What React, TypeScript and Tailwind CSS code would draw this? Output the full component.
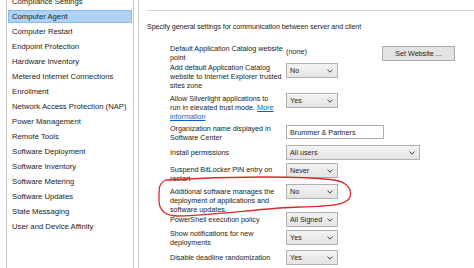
import { ReactNode } from "react";

const items = [
  "Compliance Settings",
  "Computer Agent",
  "Computer Restart",
  "Endpoint Protection",
  "Hardware Inventory",
  "Metered Internet Connections",
  "Enrollment",
  "Network Access Protection (NAP)",
  "Power Management",
  "Remote Tools",
  "Software Deployment",
  "Software Inventory",
  "Software Metering",
  "Software Updates",
  "State Messaging",
  "User and Device Affinity",
];

const Chevron = () => (
  <svg width="6" height="4" viewBox="0 0 6 4" className="shrink-0">
    <polyline points="0.5,0.5 3,3.2 5.5,0.5" fill="none" stroke="#444" strokeWidth="1" />
  </svg>
);

interface DropProps {
  value: string;
  wide?: boolean;
}

const Drop = ({ value, wide }: DropProps) => (
  <div
    className={
      (wide ? "w-[134px] " : "w-[52px] ") +
      "flex h-[15px] items-center justify-between border border-[#b1b1b1] bg-gradient-to-b from-[#f3f3f3] to-[#e4e4e4] pl-[3px] pr-[4px]"
    }
  >
    <span>{value}</span>
    <Chevron />
  </div>
);

const Label = ({ children }: { children: ReactNode }) => <div className="w-[116px] shrink-0">{children}</div>;

export default function App() {
  return (
    <div className="relative flex h-[268px] w-[474px] overflow-hidden bg-white font-['Liberation_Sans',Arial,sans-serif] text-[#222]">
      {/* settings list */}
      <div className="flex w-[138px] shrink-0">
        <div className="w-[6px]" />
        <div className="w-[128px] overflow-hidden border-x border-[#c9c9c9]">
          <ul className="-mt-[6px] text-[7.7px] leading-[11px]">
            {items.map((it) => (
              <li key={it} className="h-[15px] p-[1px]">
                <div
                  className={
                    it === "Computer Agent"
                      ? "h-[13px] whitespace-nowrap border border-[#86bbee] bg-[#aed3f7] pl-[3px]"
                      : "h-[13px] whitespace-nowrap border border-transparent pl-[3px]"
                  }
                >
                  {it}
                </div>
              </li>
            ))}
          </ul>
        </div>
        <div className="w-[4px]" />
      </div>

      {/* general settings */}
      <div className="flex-1 border-l border-[#cfcfcf] text-[7.2px] leading-[9px]">
        <div className="ml-[8px] mt-[10px] border-t border-[#d4d4d4]" />
        <p className="ml-[8px] mt-[11px] whitespace-nowrap tracking-[-0.1px]">
          Specify general settings for communication between server and client
        </p>

        <div className="mt-[13px] pl-[31px]">
          <div className="flex h-[19px]">
            <Label>
              Default Application Catalog website
              <br />
              point
            </Label>
            <div className="w-[96px] pt-[3px]">(none)</div>
            <div className="mt-[2px] flex h-[15px] w-[73px] items-center justify-center border border-[#adadad] bg-[#e3e3e3]">
              Set Website ...
            </div>
          </div>

          <div className="flex h-[30px]">
            <Label>
              Add default Application Catalog
              <br />
              website to Internet Explorer trusted
              <br />
              sites zone
            </Label>
            <Drop value="No" />
          </div>

          <div className="flex h-[31px]">
            <div className="w-[116px] shrink-0 pt-[1px]">
              Allow Silverlight applications to
              <br />
              run in elevated trust mode. <span className="text-[#0066cc] underline">More</span>
              <br />
              <span className="text-[#0066cc] underline">information</span>
            </div>
            <Drop value="Yes" />
          </div>

          <div className="flex h-[21px]">
            <Label>
              Organization name displayed in
              <br />
              Software Center
            </Label>
            <div className="mt-[1px] flex h-[14px] w-[98px] items-center border border-[#abadb3] bg-white pl-[3px]">
              Brummer &amp; Partners
            </div>
          </div>

          <div className="flex h-[18px]">
            <div className="w-[116px] shrink-0 pt-[3px]">Install permissions</div>
            <Drop value="All users" wide />
          </div>

          <div className="flex h-[21px]">
            <div className="w-[116px] shrink-0 pt-[2px]">
              Suspend BitLocker PIN entry on
              <br />
              restart
            </div>
            <Drop value="Never" />
          </div>

          <div className="flex h-[28px]">
            <div className="w-[116px] shrink-0 pt-[3px]">
              Additional software manages the
              <br />
              deployment of applications and
              <br />
              software updates.
            </div>
            <Drop value="No" />
          </div>

          <div className="flex h-[17px]">
            <div className="w-[116px] shrink-0 pt-[3px]">PowerShell execution policy</div>
            <Drop value="All Signed" />
          </div>

          <div className="flex h-[21px]">
            <Label>
              Show notifications for new
              <br />
              deployments
            </Label>
            <div className="mt-[1px]">
              <Drop value="Yes" />
            </div>
          </div>

          <div className="flex h-[15px]">
            <div className="w-[116px] shrink-0 pt-[3px]">Disable deadline randomization</div>
            <Drop value="Yes" />
          </div>
        </div>
      </div>

      {/* hand-drawn red annotation */}
      <svg className="pointer-events-none absolute left-0 top-0" width="474" height="268" viewBox="0 0 474 268">
        <path
          d="M 166 180 C 230 176, 305 176, 334 180 C 348 182, 352 190, 350 197 C 347 205, 333 206, 300 207 C 262 208, 220 215, 178 216 C 164 216, 159 210, 159 200 C 159 190, 158 183, 166 180"
          fill="none"
          stroke="#d82a2a"
          strokeWidth="1.3"
          strokeLinecap="round"
        />
      </svg>
    </div>
  );
}
